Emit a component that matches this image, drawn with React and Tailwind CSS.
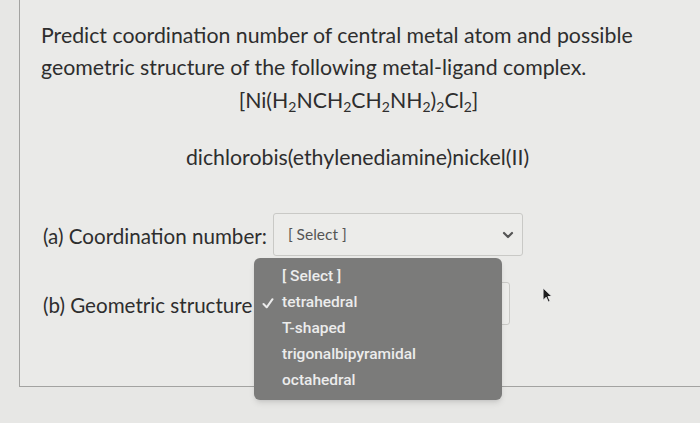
import React from 'react';

const options = ['[ Select ]', 'tetrahedral', 'T-shaped', 'trigonalbipyramidal', 'octahedral'];

const SelectBox = ({ className = '', label = '[ Select ]' }) => (
  <div className={`flex h-[43px] items-center justify-between rounded-[3px] border border-[#c9c9c6] bg-[#ececea] pl-[14px] pr-[8px] ${className}`}>
    <span className="text-[15.5px] text-[#555]">{label}</span>
    <svg width="12" height="8" viewBox="0 0 12 8" fill="none">
      <path d="M2 2l4 4 4-4" stroke="#555" strokeWidth="2.2" strokeLinecap="round" strokeLinejoin="round" />
    </svg>
  </div>
);

const App = () => {
  return (
    <div className="relative h-[423px] w-[700px] overflow-hidden bg-[#e7e7e5] pl-[19px] text-[#2e2e2e]" style={{ fontFamily: 'Lato, "Noto Sans", sans-serif' }}>
      <div className="border-b border-l border-[#a3a3a1] bg-[#eaeae8] pb-[61px] pl-[21px] pt-[19px]">
        <p className="whitespace-nowrap text-[21.3px] leading-[32px]">
          Predict coordination number of central metal atom and possible
          <br />
          geometric structure of the following metal-ligand complex.
        </p>
        <p className="mt-px pr-[24px] text-center text-[21.3px] leading-[32px]">
          [Ni(H<sub className="text-[14px]">2</sub>NCH<sub className="text-[14px]">2</sub>CH<sub className="text-[14px]">2</sub>NH<sub className="text-[14px]">2</sub>)<sub className="text-[14px]">2</sub>Cl<sub className="text-[14px]">2</sub>]
        </p>
        <p className="mt-[25px] pr-[26px] text-center text-[21.3px] leading-[32px]">dichlorobis(ethylenediamine)nickel(II)</p>

        <div className="mt-[40px] flex items-center gap-[6px]">
          <span className="pl-[2px] pt-[4px] text-[20.6px]">(a) Coordination number:</span>
          <SelectBox className="w-[250px]" />
        </div>

        <div className="mt-[26px] flex items-center gap-[2px]">
          <span className="pl-[2px] pt-[4px] text-[20.6px]">(b) Geometric structure</span>
          {/* covered by the open menu */}
          <SelectBox className="w-[256px]" label="" />
        </div>
      </div>

      {/* open dropdown menu */}
      <div className="absolute left-[254px] top-[258px] flex h-[142px] w-[248px] flex-col rounded-[6px] bg-[#7b7b7a] pt-[6px] shadow-md" style={{ fontFamily: 'Roboto, "Liberation Sans", sans-serif' }}>
        {options.map((o, i) => (
          <div key={o} className="flex h-[26px] items-center text-[15.5px] font-medium text-[#ececec]">
            <span className="flex w-[28px] justify-end pr-[8px]">
              {i === 1 && (
                <svg width="12" height="11" viewBox="0 0 12 11" fill="none">
                  <path d="M1.5 6l3.2 3.3L10.5 1.2" stroke="#ececec" strokeWidth="2" strokeLinecap="round" strokeLinejoin="round" />
                </svg>
              )}
            </span>
            <span>{o}</span>
          </div>
        ))}
      </div>

      {/* mouse pointer */}
      <svg className="absolute left-[542px] top-[287px]" width="11" height="16" viewBox="0 0 12 18">
        <path d="M1 1v14l3.5-3.5 2.5 5.5 2-1-2.5-5.3H11z" fill="#1e1e1e" stroke="#f0f0f0" strokeWidth="1" />
      </svg>
    </div>
  );
};

export default App;
